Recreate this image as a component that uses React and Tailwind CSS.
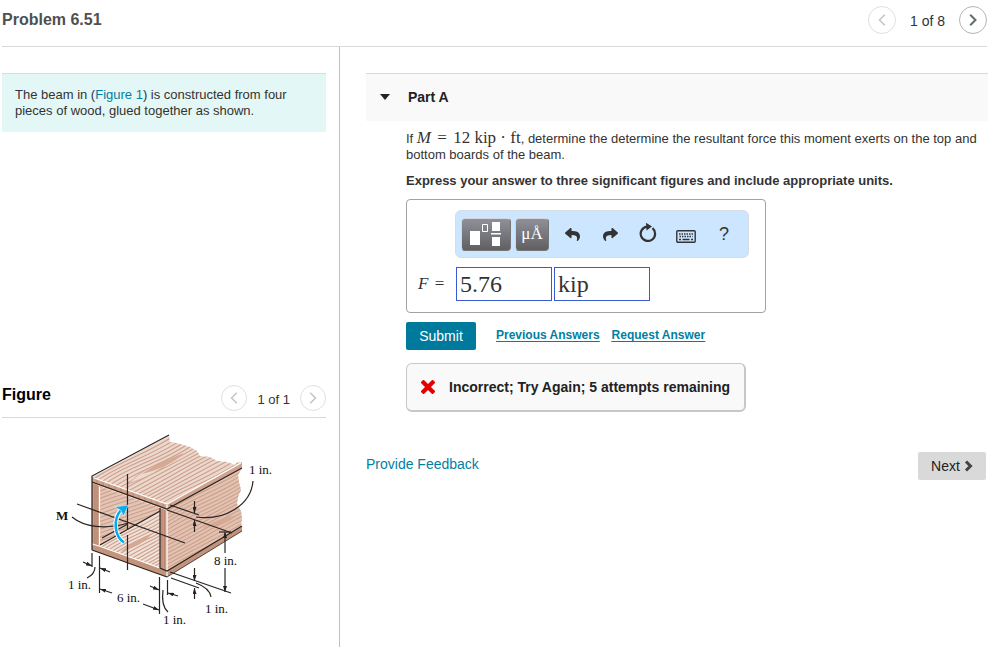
import { FaReply, FaShare } from 'react-icons/fa'

const CircleButton = ({ label, direction, active = false, size = 'w-7 h-7' }) => (
  <button
    type="button"
    aria-label={label}
    className={`${size} rounded-full border flex items-center justify-center ${
      active ? 'border-[#b5b5b5] text-[#5f6b6d]' : 'border-[#e0e0e0] text-[#c4c4c4]'
    }`}
  >
    <svg width="8" height="12" viewBox="0 0 8 12" fill="none" stroke="currentColor" strokeWidth={active ? 2 : 1.5}>
      <path d={direction === 'left' ? 'M6.8 .8 1.5 6l5.3 5.2' : 'M1.2 .8 6.5 6l-5.3 5.2'} />
    </svg>
  </button>
)

// Slightly wavy strokes between two edges of a board face
const grain = (from, to, step, count, bend) =>
  Array.from({ length: count }, (_, i) => {
    const [x1, y1] = [from[0] + step[0] * i, from[1] + step[1] * i]
    const [x2, y2] = [to[0] + step[0] * i, to[1] + step[1] * i]
    const dx = (x2 - x1) / 3
    const dy = (y2 - y1) / 3
    const b = bend * Math.sin(i / 2.5) + bend / 2
    return `M${x1} ${y1}C${x1 + dx} ${y1 + dy - b} ${x1 + dx * 2} ${y1 + dy * 2 + b} ${x2} ${y2}`
  }).join('')

const faces = [
  {
    id: 'top',
    fill: '#ecd8cd',
    shape: 'M92 477 169 436 170 442 177 443 190 447 197 451 200 456 210 457 217 461 227 462 235 465 237 462 242 462 167 504Z',
    lines: grain([88, 478], [170, 434], [4, 1.7], 28, 4),
  },
  {
    id: 'side',
    fill: '#e3c2b2',
    shape: 'M167 510 242 468 238 475 239 482 241 490 238 497 237 504 241 511 242 518 241 527 167 572Z',
    lines: grain([166, 508], [244, 466], [0, 3.8], 24, 3),
  },
  {
    id: 'wall',
    fill: '#e3c4b5',
    shape: 'M99 486 160 508 160 512 99 546Z',
    lines: grain([98, 488], [162, 466], [0, 3.8], 23, 1.5),
  },
  {
    id: 'floor',
    fill: '#f1e2d9',
    shape: 'M99 546 160 512 160 568Z',
    lines: grain([96, 547], [162, 510], [3, 1.8], 22, 3),
  },
]

const dimensions = [
  ['M83 562 92 566M110 572 100 568', 'M92 553V567M99.500 556V593'],
  ['M112 593 100 589M143 604 159 610', 'M159.500 577V614'],
  ['M150 586 159 590M178 596 168 593', 'M167.500 580V595'],
  ['M194.500 501V513M194.500 532V520', 'M170 505 199 515M167 510 232 533'],
  ['M194.500 568V581M194.500 599V588', 'M170 572 231 593M171 578 199 588'],
  ['M225 553V532M225 568V592', 'M219 532H231'],
]

const BeamFigure = () => (
  <svg viewBox="50 430 230 202" width="230" height="202" role="img" aria-label="Glued box beam with moment M" className="ml-12 mt-3">
    <defs>
      {faces.map(({ id, shape }) => (
        <clipPath id={id} key={id}>
          <path d={shape} />
        </clipPath>
      ))}
      <marker id="tip" viewBox="0 0 6 4" refX="6" refY="2" markerWidth="6" markerHeight="4" orient="auto" markerUnits="userSpaceOnUse">
        <path d="M0 0 6 2 0 4Z" fill="#222" />
      </marker>
    </defs>

    {faces.map(({ id, fill, shape, lines }) => (
      <g key={id}>
        <path d={shape} fill={fill} />
        <path d={lines} clipPath={`url(#${id})`} fill="none" stroke="#cba08c" strokeWidth="1.100" />
      </g>
    ))}
    <path d="M128 484Q145 466 170 461Q158 474 128 484Z" fill="#edd9ce" stroke="#c99d88" strokeWidth=".7" />
    <path d="M142 474Q155 464 184 453Q172 466 142 474Z" fill="#d5a994" />
    <path d="M203 528Q218 518 238 515Q224 527 203 528Z" fill="#d5a994" />
    <path d="M120 552Q135 540 152 534Q142 546 120 552Z" fill="#d5a994" />

    {/* Board ends */}
    <path d="M92 477 167 504V510L92 483Z" fill="#cfa28c" />
    <path d="M167 504 242 462V468L167 510Z" fill="#cfa38e" />
    <path d="M92 483 99 486V546L92 543Z" fill="#c89a84" />
    <path d="M160 508 167 510V571L160 568Z" fill="#c89a84" />
    <path d="M92 543 167 571V577L92 550Z" fill="#c4937c" />
    <path d="M167 571 242 526V531L167 577Z" fill="#c4937c" />
    <path
      d="M95 484V544M97 485V545M162 509V569M164.500 510V570M97 479V484M103 481V486M109 483V488M115 486V490M121 488V492M127 490V494M133 492V497M139 494V499M145 497V501M151 499V503M157 501V505M163 503V508"
      stroke="#b58069"
      strokeWidth=".8"
    />
    <path d="M94 478 167 504 241 463M167 505V576M99.500 487V545M92 544 99 546 160 568" fill="none" stroke="#fff" strokeWidth="1.200" />

    <g fill="none" stroke="#2a2422" strokeWidth="1.200">
      <path d="M92 550V476L169 435M92 482 167 509 242 468M92 550 167 577M160 508V568L167 571 242 526" />
      <path d="M167 577 242 531" strokeWidth=".8" />
      <path d="M100 545 160 511M102 538 128 524" />
      <path d="M127.500 474V530M127.500 535V570M77 504 185 543" />
      <path d="M72 517C84 527 105 530 128 523" />
      <path d="M253 481C251 505 225 521 196 517M196 583C204 586 210 590 211 597" />
      <path d="M95 567Q95 574 87 578M163 590Q161 606 168 612" />
      {dimensions.map(([arrows, lines]) => (
        <g key={lines}>
          <path d={lines} />
          {arrows.split('M').filter(Boolean).map((arrow) => (
            <path key={arrow} d={`M${arrow}`} markerEnd="url(#tip)" />
          ))}
        </g>
      ))}
    </g>

    <path d="M124 542.500C114 536 113 519 121 510" fill="none" stroke="#fff" strokeWidth="4.500" />
    <path d="M124 542.500C114 536 113 519 121 510" fill="none" stroke="#00aeef" strokeWidth="2.600" />
    <path d="M114.500 507 128.500 505 123.500 516 120.500 510Z" fill="#00aeef" stroke="#fff" strokeWidth=".5" />

    <g className="font-['Liberation_Serif',serif] text-[13px]" fill="#111">
      <text x="56" y="520" fontWeight="bold">M</text>
      <text x="249" y="474">1 in.</text>
      <text x="214" y="565">8 in.</text>
      <text x="68" y="589">1 in.</text>
      <text x="117" y="602">6 in.</text>
      <text x="205" y="613">1 in.</text>
      <text x="163" y="624">1 in.</text>
    </g>
  </svg>
)

const ToolButton = ({ label, children }) => (
  <button type="button" aria-label={label} className="w-[38px] h-8 shrink-0 flex items-center justify-center text-[#333]">
    {children}
  </button>
)

const paletteButton =
  'h-[33px] shrink-0 rounded-[4px] border border-t-[#d5d5dc] border-l-[#d5d5dc] border-r-[#777] border-b-[#777] bg-linear-to-b from-[#90909b] to-[#606062] flex items-center justify-center'

const Toolbar = () => (
  <div className="ml-12 w-[294px] h-12 px-[5px] rounded-md border border-[#d6dde4] bg-[#cce6ff] flex items-center">
    <button type="button" aria-label="Templates" className={`${paletteButton} w-[50px] mr-1`}>
      <svg width="32" height="26" viewBox="0 0 32 26">
        <path fill="#fff" d="M0 10h10v14H0zM22 1h8v9h-8zM21 12h10v1.500H21zM22 16h8v9h-8z" />
        <path fill="none" stroke="#fff" d="M12.500 3.500h5v7h-5z" />
      </svg>
    </button>
    <button type="button" className={`${paletteButton} w-[34px] mr-1 font-['Liberation_Serif',serif] text-[17px] text-white`}>
      μÅ
    </button>
    <ToolButton label="Undo">
      <FaReply size={15} />
    </ToolButton>
    <ToolButton label="Redo">
      <FaShare size={15} />
    </ToolButton>
    <ToolButton label="Reset">
      <svg width="18" height="20" viewBox="0 0 18 20" className="mb-1">
        <path d="M13.500 6.200A7.200 7.200 0 1 1 8 4.600" fill="none" stroke="currentColor" strokeWidth="2.200" />
        <path d="M7 .8 13 4.500 7.500 8.500Z" fill="currentColor" />
      </svg>
    </ToolButton>
    <ToolButton label="Keyboard shortcuts">
      <svg width="20" height="13" viewBox="0 0 20 13" className="mt-1">
        <rect x=".8" y=".8" width="18.400" height="11.400" rx="1" fill="none" stroke="currentColor" strokeWidth="1.400" />
        <path d="M3 4h14M3.500 6.500h13" stroke="currentColor" strokeWidth="1.500" strokeDasharray="1.500 1" />
        <path d="M3 9.500h2M6.500 9.500h7M15 9.500h2" stroke="currentColor" strokeWidth="1.500" />
      </svg>
    </ToolButton>
    <ToolButton label="Help">
      <span className="text-lg">?</span>
    </ToolButton>
  </div>
)

const answerInput =
  "w-24 h-[34px] px-[3px] border border-[#3a5bcd] font-['Liberation_Serif',serif] text-2xl text-[#333] bg-white outline-none"

const ProblemPanel = () => (
  <aside className="w-[340px] shrink-0 border-r border-[#b9c2cb] pl-0.5 pr-[13px] pt-[26px]">
    <p className="border-t border-[#d5dedd] bg-[#e3f7f6] p-[13px] text-[13px] leading-4">
      The beam in (<a href="#figure" className="text-[#007fa3]">Figure 1</a>) is constructed from four pieces of wood, glued together as shown.
    </p>
    <div id="figure" className="mt-[253px] pb-1.5 flex items-center justify-between border-b border-[#d9d9d9]">
      <h2 className="text-base leading-5 font-bold text-black pb-1.5">Figure</h2>
      <div className="flex items-center gap-2.5 text-[13px]">
        <CircleButton label="Previous figure" direction="left" size="w-[26px] h-[26px]" />
        <span className="pt-1">1 of 1</span>
        <CircleButton label="Next figure" direction="right" size="w-[26px] h-[26px]" />
      </div>
    </div>
    <BeamFigure />
  </aside>
)

const PartA = () => (
  <section>
    <h2 className="h-12 px-3.5 pb-0.5 border-t border-[#d9d9d9] bg-[#f9f9f9] text-sm font-bold text-[#222]">
      <button type="button" className="h-full flex items-center gap-[18px]">
        <svg width="10" height="6" viewBox="0 0 10 6">
          <path d="M0 0h10L5 6Z" fill="#222" />
        </svg>
        Part A
      </button>
    </h2>

    <div className="pl-10 pt-2 text-[13px] leading-4">
      <p>
        If{' '}
        <span className="font-['Liberation_Serif',serif] text-[17px] leading-none">
          <i>M</i> <span className="mx-0.5">=</span> 12 kip · ft
        </span>
        , determine the determine the resultant force this moment exerts on the top and bottom boards of the beam.
      </p>
      <p className="mt-2.5 font-bold">Express your answer to three significant figures and include appropriate units.</p>

      <form onSubmit={(e) => e.preventDefault()}>
        <div className="mt-2.5 max-w-[360px] border border-[#a3a3a3] rounded-[4px] pt-2.5 pb-[11px]">
          <Toolbar />
          <div className="mt-[9px] flex items-center">
            <label htmlFor="force" className="w-[49px] pl-[11px] font-['Liberation_Serif',serif] text-[17px] whitespace-nowrap">
              <i>F</i> <span className="ml-0.5">=</span>
            </label>
            <input id="force" type="text" defaultValue="5.76" className={answerInput} />
            <input aria-label="Units" type="text" defaultValue="kip" className={`${answerInput} ml-0.5`} />
          </div>
        </div>

        <div className="mt-[9px] flex items-start">
          <button type="submit" className="h-7 w-[70px] rounded-xs bg-[#007a9c] text-sm text-white">
            Submit
          </button>
          <div className="ml-5 pt-[5px] flex gap-3 text-xs font-bold text-[#007fa3] underline underline-offset-2">
            <a href="#previous">Previous Answers</a>
            <a href="#request">Request Answer</a>
          </div>
        </div>
      </form>

      <div role="status" className="mt-[13px] w-fit h-[49px] px-3.5 flex items-center gap-3.5 rounded-md border border-r-2 border-b-2 border-[#c7c7c7] bg-[#f9f9f9] text-sm font-bold text-[#222]">
        <svg width="14" height="14" viewBox="0 0 14 14">
          <path d="M2.500 2.500 11.500 11.500M11.500 2.500 2.500 11.500" stroke="#e60000" strokeWidth="4.200" strokeLinecap="square" strokeLinejoin="round" />
        </svg>
        Incorrect; Try Again; 5 attempts remaining
      </div>
    </div>
  </section>
)

const App = () => (
  <div className="min-h-screen flex flex-col bg-white font-['Liberation_Sans',Arial,sans-serif] text-[#333]">
    <header className="ml-0.5 mr-[13px] h-[47px] pb-[7px] flex items-center justify-between border-b border-[#d9d9d9]">
      <h1 className="text-base font-bold text-[#505050]">Problem 6.51</h1>
      <nav className="flex items-center gap-3.5 text-sm">
        <CircleButton label="Previous problem" direction="left" />
        <span className="pt-0.5">1 of 8</span>
        <CircleButton label="Next problem" direction="right" active />
      </nav>
    </header>

    <div className="grow flex">
      <ProblemPanel />
      <main className="grow min-w-0 pl-[26px] pr-3 pt-[26px]">
        <PartA />
        <div className="mt-10 mr-0.5 flex items-center justify-between text-sm">
          <a href="#feedback" className="text-[#007fa3] pb-1">Provide Feedback</a>
          <button type="button" className="w-[68px] h-7 rounded-xs bg-[#d9d9d9] flex items-center justify-center gap-1 text-[#222]">
            Next
            <svg width="9" height="12" viewBox="0 0 9 12">
              <path d="M2 1.500 6.500 6 2 10.500" fill="none" stroke="#444" strokeWidth="3" />
            </svg>
          </button>
        </div>
      </main>
    </div>
  </div>
)

export default App
